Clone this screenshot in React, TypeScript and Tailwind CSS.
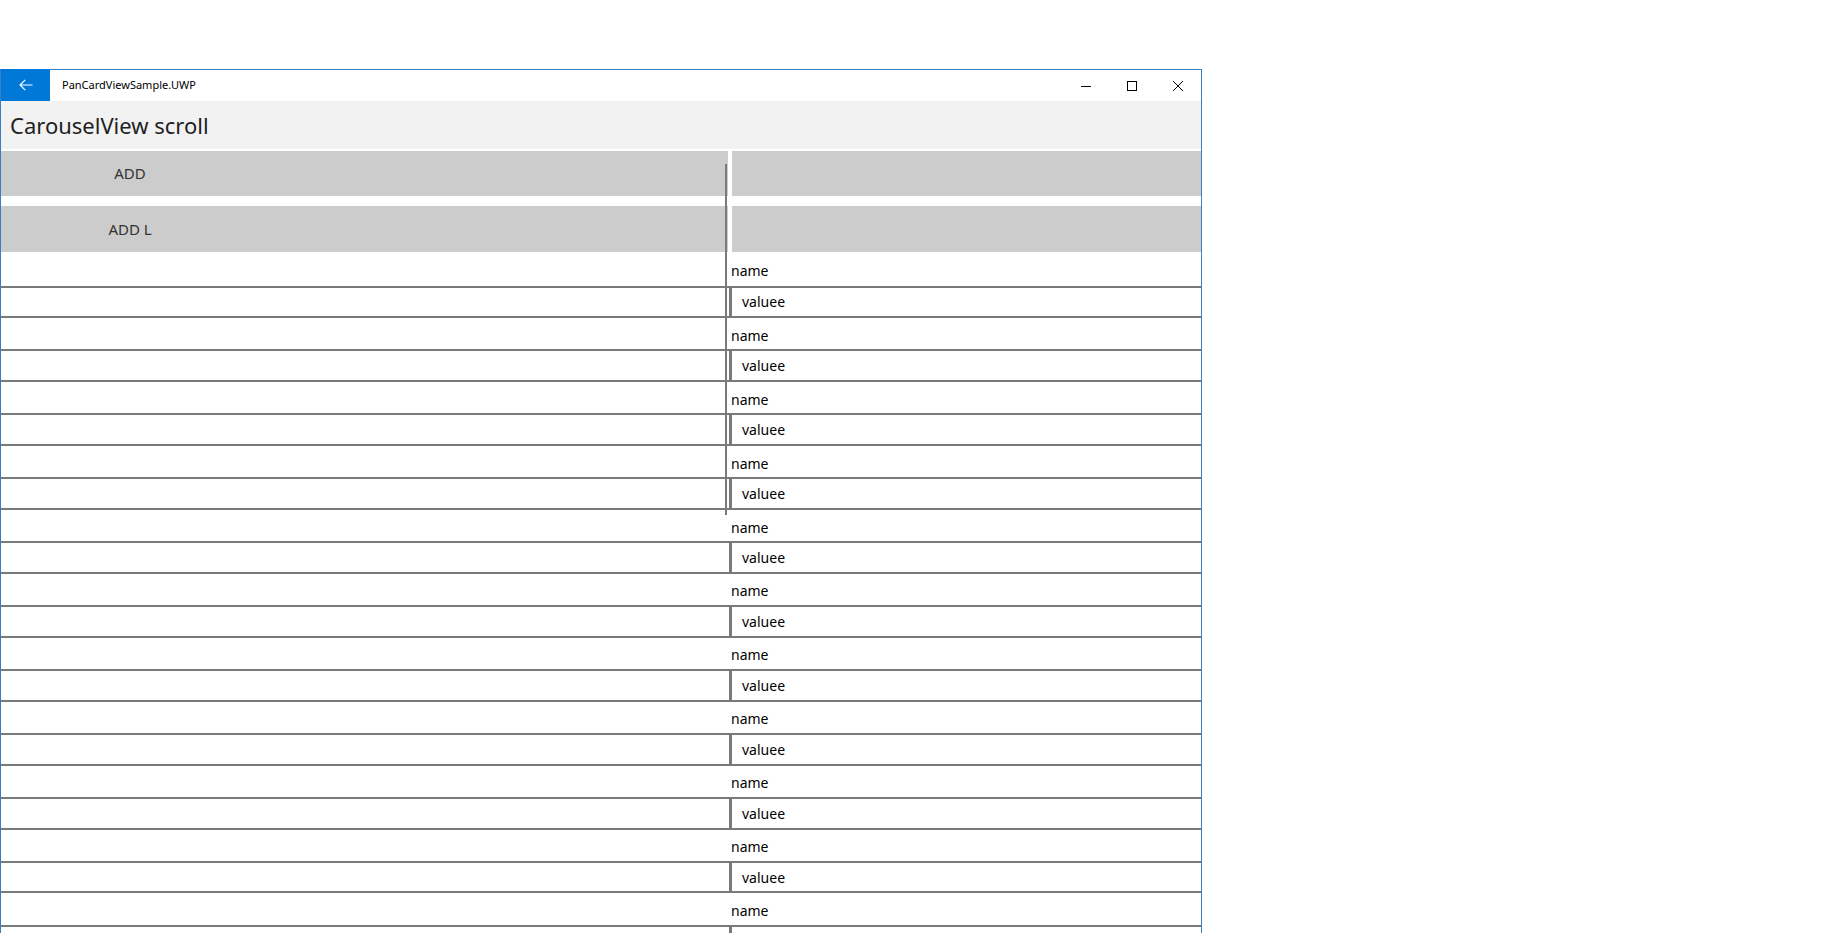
import React from 'react';

const ROWS = 10;

const TitleBar: React.FC = () => (
  <div className="flex h-[31px] items-center bg-white">
    <div className="-mt-[1px] flex h-[32px] w-[49px] items-center justify-center bg-[#0078d7]">
      <svg width="14" height="12" viewBox="0 0 14 12" fill="none" stroke="white" strokeWidth="1.2">
        <path d="M13.5 6H1M6.2 0.8L1 6l5.2 5.2" />
      </svg>
    </div>
    <span className="ml-[12px] text-[11px] text-black">PanCardViewSample.UWP</span>
    <div className="ml-auto flex h-full items-center">
      <div className="flex h-full w-[46px] items-center justify-center">
        <svg width="10" height="10" viewBox="0 0 10 10" stroke="black" strokeWidth="1">
          <path d="M0 5.5h10" />
        </svg>
      </div>
      <div className="flex h-full w-[46px] items-center justify-center">
        <svg width="10" height="10" viewBox="0 0 10 10" fill="none" stroke="black" strokeWidth="1">
          <rect x="0.5" y="0.5" width="9" height="9" />
        </svg>
      </div>
      <div className="flex h-full w-[46px] items-center justify-center">
        <svg width="10" height="10" viewBox="0 0 10 10" stroke="black" strokeWidth="1">
          <path d="M0 0l10 10M10 0L0 10" />
        </svg>
      </div>
    </div>
  </div>
);

const ButtonRow: React.FC<{ label: string; className?: string }> = ({ label, className }) => (
  <div className={`flex ${className ?? ''}`}>
    <div className="flex w-[727px] bg-[#cccccc]">
      <div className="flex w-[258px] items-center justify-center text-[15px] text-[#333333]">{label}</div>
    </div>
    <div className="ml-[4px] flex-1 bg-[#cccccc]" />
  </div>
);

const NameRow: React.FC<{ first?: boolean }> = ({ first }) => (
  <div className={`flex items-center pl-[730px] pt-[3px] text-[14px] text-black ${first ? 'h-[33.5px]' : 'h-[31.45px]'}`}>
    name
  </div>
);

const ValueRow: React.FC<{ text?: string }> = ({ text }) => (
  <div className="flex h-[32.5px] border-y-2 border-[#7a7a7a]">
    <div className="w-[728px]" />
    <div className="flex flex-1 items-center border-l-[3px] border-[#7a7a7a] pl-[10px] text-[14px] text-black">
      {text}
    </div>
  </div>
);

export default function App() {
  return (
    <div
      className="relative h-[933px] w-[1837px] overflow-hidden bg-white"
      style={{ fontFamily: '"Noto Sans", "Open Sans", sans-serif' }}
    >
      <div className="mt-[69px] w-[1202px] border-x border-t border-[#3a7fc1]">
        <TitleBar />
        <div className="flex h-[48px] items-center bg-[#f2f2f2] pl-[9px] text-[22px] text-[#1f1f1f]">
          CarouselView scroll
        </div>
        <div className="relative pt-[2px]">
          <ButtonRow label="ADD" className="h-[45px]" />
          <ButtonRow label="ADD L" className="mt-[10px] h-[46px]" />
          <NameRow first />
          {Array.from({ length: ROWS }).map((_, i) => (
            <React.Fragment key={i}>
              <ValueRow text="valuee" />
              <NameRow />
            </React.Fragment>
          ))}
          <ValueRow />
          <div className="absolute left-[724px] top-[15px] h-[351px] w-[2px] bg-[#7a7a7a]" />
        </div>
      </div>
    </div>
  );
}
